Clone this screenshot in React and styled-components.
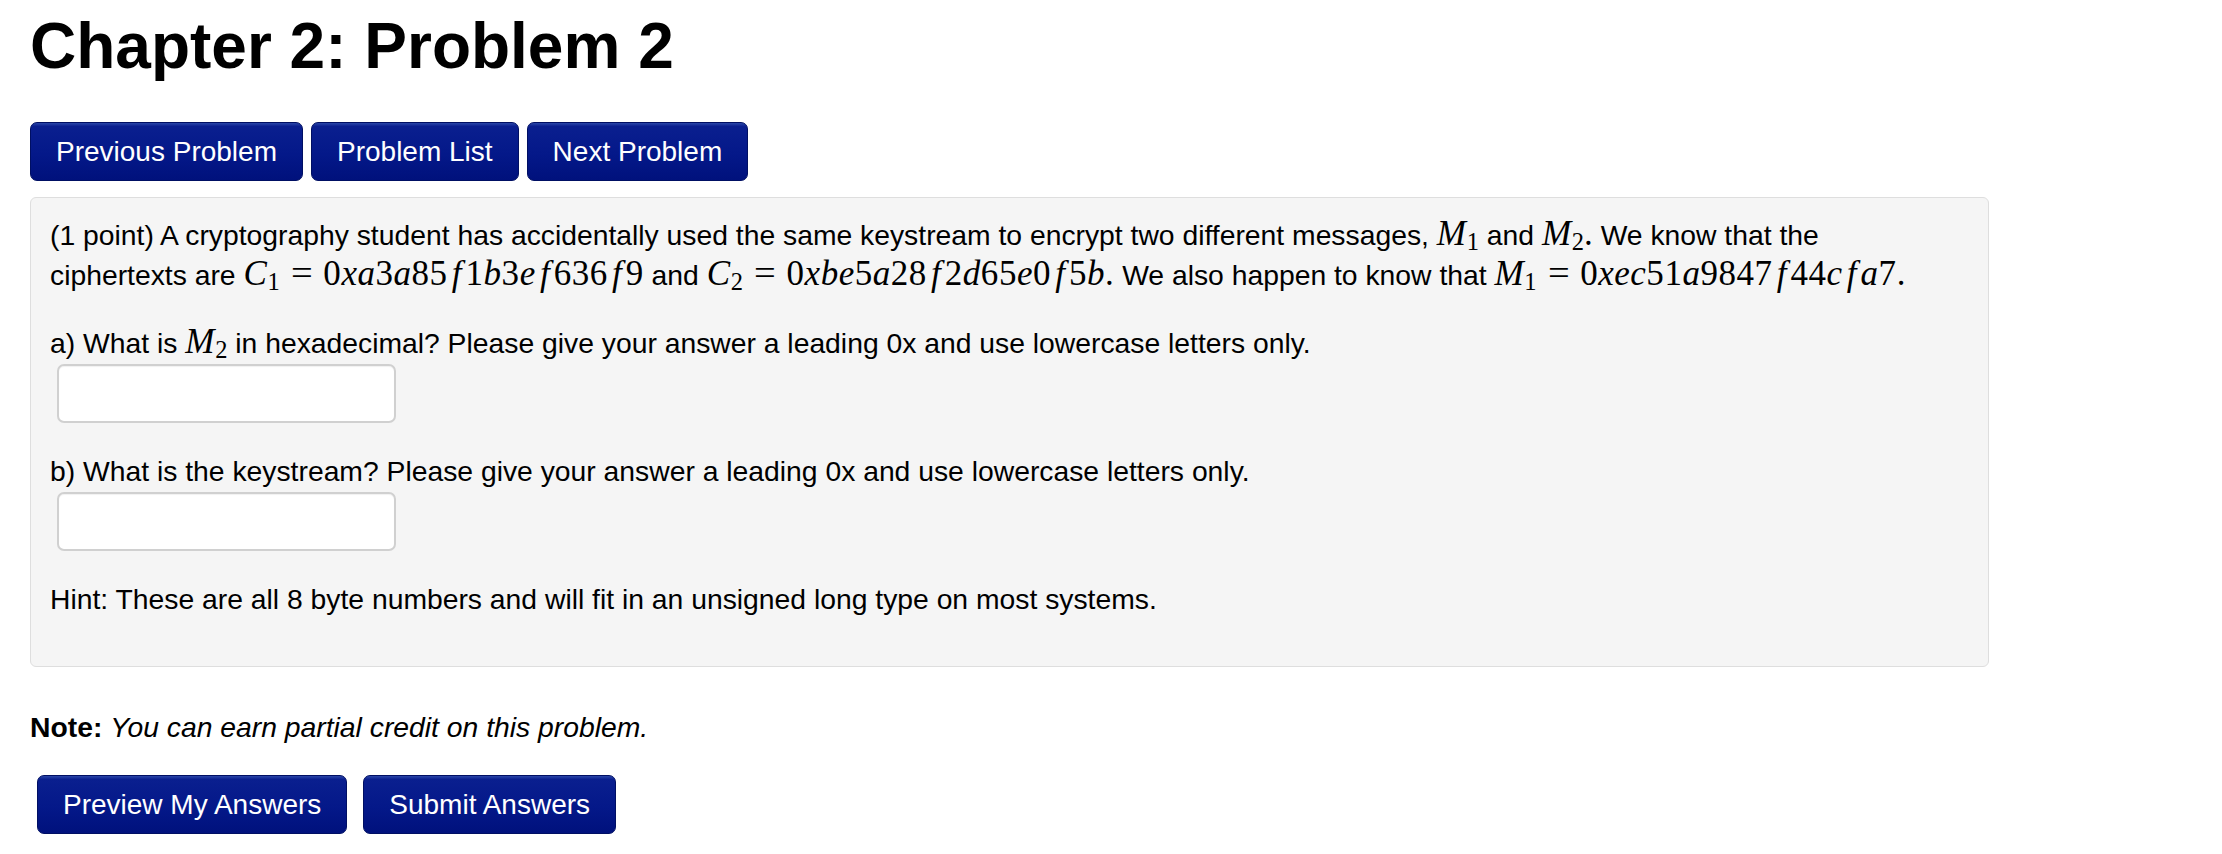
import styled, { createGlobalStyle } from "styled-components";

const GlobalStyle = createGlobalStyle`
  body {
    margin: 0;
    background: #ffffff;
    color: #000000;
    font-family: "Liberation Sans", Helvetica, Arial, sans-serif;
  }
`;

function Hex({ value }) {
  return (
    <HexDigits>
      {value.split("").map((ch, i) =>
        /[0-9.]/.test(ch) ? (
          <Num key={i}>{ch}</Num>
        ) : (
          <Ident key={i} $f={ch === "f"}>
            {ch}
          </Ident>
        )
      )}
    </HexDigits>
  );
}

function Var({ name, sub }) {
  return (
    <>
      <Ident>{name}</Ident>
      <Sub>{sub}</Sub>
    </>
  );
}

function App() {
  return (
    <Page>
      <GlobalStyle />
      <Title>Chapter 2: Problem 2</Title>

      <NavBar>
        <Button>Previous Problem</Button>
        <Button>Problem List</Button>
        <Button>Next Problem</Button>
      </NavBar>

      <ProblemPanel>
        <Para>
          (1 point) A cryptography student has accidentally used the same
          keystream to encrypt two different messages,{" "}
          <Math>
            <Var name="M" sub="1" />
          </Math>{" "}
          and{" "}
          <Math>
            <Var name="M" sub="2" />
            <Num>.</Num>
          </Math>{" "}
          We know that the
          <br />
          ciphertexts are{" "}
          <Math>
            <Var name="C" sub="1" />
            <Rel>=</Rel>
            <Hex value="0xa3a85f1b3ef636f9" />
          </Math>{" "}
          and{" "}
          <Math>
            <Var name="C" sub="2" />
            <Rel>=</Rel>
            <Hex value="0xbe5a28f2d65e0f5b." />
          </Math>{" "}
          We also happen to know that{" "}
          <Math>
            <Var name="M" sub="1" />
            <Rel>=</Rel>
            <Hex value="0xec51a9847f44cfa7." />
          </Math>
        </Para>

        <Question>
          <QuestionText>
            a) What is{" "}
            <Math>
              <Var name="M" sub="2" />
            </Math>{" "}
            in hexadecimal? Please give your answer a leading 0x and use
            lowercase letters only.
          </QuestionText>
          <AnswerInput type="text" />
        </Question>

        <Question>
          <QuestionText>
            b) What is the keystream? Please give your answer a leading 0x and
            use lowercase letters only.
          </QuestionText>
          <AnswerInput type="text" />
        </Question>

        <Para>
          Hint: These are all 8 byte numbers and will fit in an unsigned long
          type on most systems.
        </Para>
      </ProblemPanel>

      <Note>
        <b>Note:</b> <i>You can earn partial credit on this problem.</i>
      </Note>

      <SubmitBar>
        <Button>Preview My Answers</Button>
        <Button>Submit Answers</Button>
      </SubmitBar>
    </Page>
  );
}

export default App;

const Page = styled.div`
  padding: 9px 0 40px 30px;
  font-size: 28.3px;
  line-height: 40px;
`;

const Title = styled.h1`
  margin: 0;
  font-size: 64px;
  line-height: 74px;
  font-weight: bold;
`;

const NavBar = styled.div`
  display: flex;
  gap: 8px;
  margin-top: 39px;
`;

const Button = styled.button`
  padding: 8px 25px;
  border: 1px solid #000f63;
  border-radius: 7px;
  background: linear-gradient(
    to bottom,
    #2a46a8 0%,
    #0a1f8f 6%,
    #041889 55%,
    #00117c 100%
  );
  color: #ffffff;
  font-family: "Liberation Sans", Helvetica, Arial, sans-serif;
  font-size: 28px;
  line-height: 41px;
  cursor: pointer;
`;

const ProblemPanel = styled.div`
  box-sizing: border-box;
  width: 1959px;
  margin-top: 16px;
  padding: 17px 19px 19px 19px;
  background: #f5f5f5;
  border: 1px solid #dedede;
  border-radius: 6px;
`;

const Para = styled.p`
  margin: 0 0 28px;
`;

const Question = styled.div`
  margin: 0 0 28px;
`;

const QuestionText = styled.div``;

const AnswerInput = styled.input`
  display: block;
  box-sizing: border-box;
  width: 339px;
  height: 59px;
  margin: 1px 0 0 7px;
  padding: 6px 12px;
  background: #ffffff;
  border: 2px solid #d0d0d0;
  border-radius: 7px;
  box-shadow: inset 0 1px 1px rgba(0, 0, 0, 0.06);
  font-size: 28px;
`;

const Math = styled.span`
  font-family: "Liberation Serif", "Times New Roman", serif;
  font-size: 35px;
  line-height: 1;
  white-space: nowrap;
`;

const HexDigits = styled.span`
  letter-spacing: 0.015em;
`;

const Ident = styled.span`
  font-style: italic;
  margin: ${(p) => (p.$f ? "0 0.1em 0 0.12em" : "0")};
`;

const Num = styled.span`
  font-style: normal;
`;

const Sub = styled.span`
  font-size: 0.7em;
  vertical-align: -0.22em;
  margin-left: 0.03em;
`;

const Rel = styled.span`
  display: inline-block;
  margin: 0 0.34em;
  transform: scaleX(1.1);
`;

const Note = styled.div`
  margin-top: 40px;
`;

const SubmitBar = styled.div`
  display: flex;
  gap: 16px;
  margin: 28px 0 0 7px;
`;
